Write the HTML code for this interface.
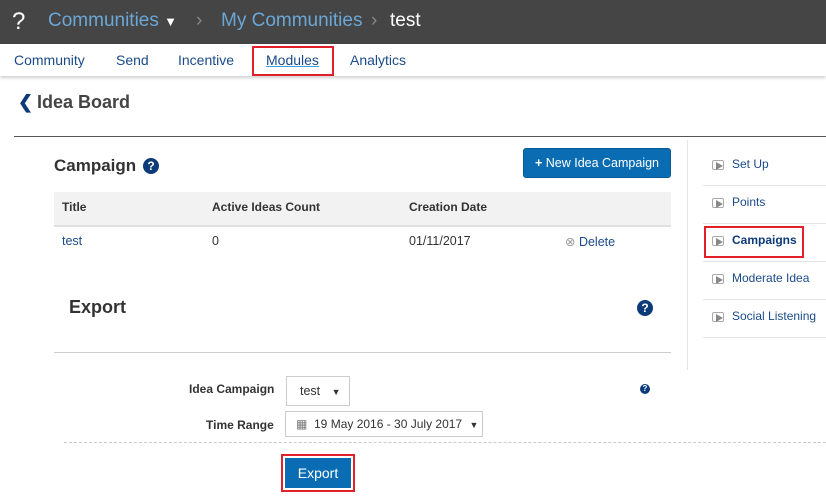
<!DOCTYPE html>
<html><head><style>
*{margin:0;padding:0;box-sizing:border-box}
body{width:826px;height:499px;overflow:hidden;background:#fff;font-family:"Liberation Sans",sans-serif;position:relative}
.a{position:absolute;white-space:nowrap}
.hdr{left:0;top:0;width:826px;height:44px;background:#454545}
.nav{left:0;top:44px;width:826px;height:32px;background:#fff;box-shadow:0 2px 3px rgba(0,0,0,.18)}
.nv{top:52px;font-size:14px;color:#1a4a8a}
.sb{left:732px;font-size:12px;color:#1a4a8a}
.sl{left:703px;width:123px;height:1px;background:#e4e4e4}
.ic{position:absolute;left:-20px;top:3px;width:12px;height:10px;border:1.5px solid #aaa;border-radius:2px}
.ic:after{content:"";position:absolute;left:3px;top:1px;width:0;height:0;border-left:7px solid #888;border-top:4px solid transparent;border-bottom:4px solid transparent}
.th{top:200px;font-size:12px;font-weight:bold;color:#333}
.q{border-radius:50%;background:#0d3a78;color:#fff;font-weight:bold;text-align:center}
</style></head><body>
<div class="a hdr"></div>
<div class="a" style="left:12px;top:8px;color:#fff;font-size:24px">?</div>
<div class="a" style="left:48px;top:10px;color:#6aa7d6;font-size:19px">Communities <span style="font-size:13px;color:#fff">&#9660;</span></div>
<div class="a" style="left:196px;top:10px;color:#888;font-size:19px">&rsaquo;</div>
<div class="a" style="left:221px;top:10px;color:#6aa7d6;font-size:19px">My Communities</div>
<div class="a" style="left:371px;top:10px;color:#888;font-size:19px">&rsaquo;</div>
<div class="a" style="left:390px;top:10px;color:#fff;font-size:19px">test</div>
<div class="a nav"></div>
<div class="a nv" style="left:14px">Community</div>
<div class="a nv" style="left:116px">Send</div>
<div class="a nv" style="left:178px">Incentive</div>
<div class="a" style="left:252px;top:46px;width:82px;height:30px;border:2px solid #e0202a"></div>
<div class="a nv" style="left:266px;text-decoration:underline;text-decoration-color:#3aa0dc">Modules</div>
<div class="a nv" style="left:350px">Analytics</div>
<div class="a" style="left:18px;top:92px;font-size:18px;color:#0d3a78;font-weight:bold">&#10094;</div>
<div class="a" style="left:37px;top:92px;font-size:18px;color:#444;font-weight:bold">Idea Board</div>
<div class="a" style="left:14px;top:136px;width:812px;height:1px;background:#555"></div>
<div class="a" style="left:687px;top:140px;width:1px;height:230px;background:#e4e4e4"></div>
<div class="a" style="left:54px;top:156px;font-size:17px;color:#333;font-weight:bold">Campaign</div>
<div class="a q" style="left:143px;top:158px;width:16px;height:16px;font-size:12px;line-height:16px">?</div>
<div class="a" style="left:523px;top:148px;width:148px;height:30px;background:#0a6db3;border:1px solid #075a95;border-radius:3px;color:#fff;font-size:12.5px;line-height:28px;text-align:center"><b>+</b> New Idea Campaign</div>
<div class="a" style="left:54px;top:192px;width:617px;height:35px;background:#f2f2f2;border-bottom:2px solid #e0e0e0"></div>
<div class="a th" style="left:62px">Title</div>
<div class="a th" style="left:212px">Active Ideas Count</div>
<div class="a th" style="left:409px">Creation Date</div>
<div class="a" style="left:62px;top:234px;font-size:12.5px;color:#1a4a8a">test</div>
<div class="a" style="left:212px;top:234px;font-size:12.5px;color:#333">0</div>
<div class="a" style="left:409px;top:234px;font-size:12.5px;color:#333">01/11/2017</div>
<div class="a" style="left:565px;top:234px;font-size:12.5px;color:#1a4a8a"><span style="color:#999">&#8855;</span> Delete</div>
<div class="a" style="left:69px;top:297px;font-size:18px;color:#333;font-weight:bold">Export</div>
<div class="a q" style="left:637px;top:300px;width:16px;height:16px;font-size:12px;line-height:16px">?</div>
<div class="a" style="left:54px;top:352px;width:617px;height:1px;background:#ccc"></div>
<div class="a" style="left:189px;top:382px;font-size:12px;color:#333;font-weight:bold">Idea Campaign</div>
<div class="a" style="left:286px;top:376px;width:64px;height:30px;border:1px solid #ccc;font-size:12.5px;color:#333;line-height:28px;padding-left:13px">test <span style="font-size:9px;margin-left:8px">&#9660;</span></div>
<div class="a q" style="left:640px;top:384px;width:10px;height:10px;font-size:8px;line-height:10px">?</div>
<div class="a" style="left:206px;top:418px;font-size:12px;color:#333;font-weight:bold">Time Range</div>
<div class="a" style="left:285px;top:411px;width:198px;height:26px;border:1px solid #ccc;font-size:12px;color:#333;line-height:24px;padding-left:10px"><span style="color:#777">&#9638;</span>&nbsp; 19 May 2016 - 30 July 2017 <span style="font-size:9px;margin-left:4px">&#9660;</span></div>
<div class="a" style="left:64px;top:442px;width:762px;border-top:1px dashed #ccc"></div>
<div class="a" style="left:281px;top:454px;width:74px;height:38px;border:2px solid #e0202a"></div>
<div class="a" style="left:285px;top:458px;width:66px;height:30px;background:#0a6db3;color:#fff;font-size:14px;line-height:30px;text-align:center">Export</div>
<div class="a sl" style="top:185px"></div><div class="a sl" style="top:223px"></div><div class="a sl" style="top:261px"></div><div class="a sl" style="top:299px"></div><div class="a sl" style="top:337px"></div>
<div class="a sb" style="top:157px"><span class="ic"></span>Set Up</div>
<div class="a sb" style="top:195px"><span class="ic"></span>Points</div>
<div class="a" style="left:704px;top:226px;width:100px;height:32px;border:2px solid #e0202a"></div>
<div class="a sb" style="top:233px;font-weight:bold;color:#0d3a78"><span class="ic"></span>Campaigns</div>
<div class="a sb" style="top:271px"><span class="ic"></span>Moderate Idea</div>
<div class="a sb" style="top:309px"><span class="ic"></span>Social Listening</div>
</body></html>
